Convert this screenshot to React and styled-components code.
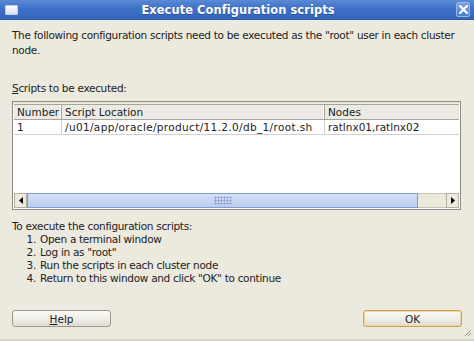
import styled, { createGlobalStyle } from 'styled-components';

const GlobalStyle = createGlobalStyle`
  html, body {
    margin: 0;
    padding: 0;
    background: #ece9de;
  }
  body {
    font-family: "DejaVu Sans", Verdana, sans-serif;
    font-size: 10.5px;
    color: #222;
  }
`;

const rows = [
  {
    number: '1',
    location: '/u01/app/oracle/product/11.2.0/db_1/root.sh',
    nodes: 'ratlnx01,ratlnx02',
  },
];

const steps = [
  'Open a terminal window',
  'Log in as "root"',
  'Run the scripts in each cluster node',
  'Return to this window and click "OK" to continue',
];

export default function App() {
  return (
    <>
      <GlobalStyle />
      <Window>
        <TitleBar>
          <WindowIcon />
          <Title>Execute Configuration scripts</Title>
          <CloseButton aria-label='Close'>
            <svg width='9' height='9' viewBox='0 0 9 9'>
              <path d='M1 1 L8 8 M8 1 L1 8' stroke='#fff' strokeWidth='2.2' strokeLinecap='square' />
            </svg>
          </CloseButton>
        </TitleBar>

        <Body>
          <Intro>
            The following configuration scripts need to be executed as the "root" user in each cluster
            <br />
            node.
          </Intro>

          <Label>
            <u>S</u>cripts to be executed:
          </Label>

          <TableBox>
            <HeaderRow>
              <HeadCell>Number</HeadCell>
              <HeadCell>Script Location</HeadCell>
              <HeadCell $last>Nodes</HeadCell>
            </HeaderRow>
            {rows.map((r) => (
              <Row key={r.number}>
                <Cell>{r.number}</Cell>
                <Cell $wide>{r.location}</Cell>
                <Cell $last>{r.nodes}</Cell>
              </Row>
            ))}
            <Filler />
            <ScrollBar>
              <ArrowButton>
                <svg width='4' height='7' viewBox='0 0 4 7'>
                  <path d='M4 0 L0 3.5 L4 7 Z' fill='#000' />
                </svg>
              </ArrowButton>
              <Thumb>
                <Grip />
              </Thumb>
              <Track />
              <ArrowButton>
                <svg width='4' height='7' viewBox='0 0 4 7'>
                  <path d='M0 0 L4 3.5 L0 7 Z' fill='#000' />
                </svg>
              </ArrowButton>
            </ScrollBar>
          </TableBox>

          <Instructions>
            <div>To execute the configuration scripts:</div>
            <Steps>
              {steps.map((s, i) => (
                <li key={i}>
                  <Num>{i + 1}.</Num>
                  {s}
                </li>
              ))}
            </Steps>
          </Instructions>

          <ButtonRow>
            <Button>
              <u>H</u>elp
            </Button>
            <Button $default>OK</Button>
          </ButtonRow>
        </Body>
        <ResizeGrip>
          <svg width='8' height='8' viewBox='0 0 8 8'>
            <path d='M7 1 L1 7 M7 4 L4 7' stroke='#9a9888' strokeWidth='1' />
          </svg>
        </ResizeGrip>
      </Window>
    </>
  );
}

const Window = styled.div`
  position: relative;
  width: 474px;
  height: 341px;
  display: flex;
  flex-direction: column;
  background: #ece9de;
  border-bottom: 2px solid #d6d3c6;
  box-sizing: border-box;
  overflow: hidden;
`;

const TitleBar = styled.div`
  height: 20px;
  flex: none;
  display: flex;
  align-items: center;
  padding: 0 4px 0 5px;
  background: linear-gradient(#5b8bd6, #3d70c6 45%, #3566bd);
  border-bottom: 1px solid #2d5aa8;
  box-sizing: border-box;
`;

const WindowIcon = styled.div`
  width: 11px;
  height: 8px;
  background: linear-gradient(#ffffff, #d8dff0);
  border: 1px solid #c4cfe6;
  border-radius: 1px;
`;

const Title = styled.div`
  flex: 1;
  text-align: center;
  color: #fff;
  font-weight: bold;
  font-size: 11.4px;
  letter-spacing: 0.1px;
  text-shadow: 0 1px 0 #2a4f92;
  padding-left: 2px;
`;

const CloseButton = styled.div`
  width: 14px;
  height: 15px;
  display: flex;
  align-items: center;
  justify-content: center;
  background: linear-gradient(#7aa3e4, #4b7dd0);
  border: 1px solid #9ab6e6;
  border-radius: 2px;
  box-sizing: border-box;
`;

const Body = styled.div`
  flex: 1;
  display: flex;
  flex-direction: column;
  padding: 8px 13px 0 12px;
  letter-spacing: -0.3px;
`;

const Intro = styled.div`
  line-height: 15px;
  white-space: nowrap;
`;

const Label = styled.div`
  margin-top: 23px;
  line-height: 14px;
`;

const TableBox = styled.div`
  margin-top: 6px;
  width: 449px;
  height: 109px;
  display: flex;
  flex-direction: column;
  background: #fff;
  border: 1px solid #8f8d85;
  box-sizing: border-box;
  padding: 2px 1px 1px 1px;
  background-clip: padding-box;
  box-shadow: inset 0 1px 0 #ece9de, inset 0 2px 0 #ece9de;
  letter-spacing: 0;
`;

const columns = '48px 263px 1fr';

const HeaderRow = styled.div`
  display: grid;
  grid-template-columns: ${columns};
  height: 16px;
  background: #ebeae4;
  border-top: 1px solid #a7a59b;
  border-bottom: 1px solid #a7a59b;
  box-sizing: border-box;
`;

const HeadCell = styled.div`
  padding-left: 3px;
  line-height: 14px;
  white-space: nowrap;
  overflow: hidden;
  border-right: ${(p) => (p.$last ? 'none' : '1px solid #a7a59b')};
  box-shadow: ${(p) => (p.$last ? 'none' : 'inset -1px 0 0 #fff')};
`;

const Row = styled.div`
  display: grid;
  grid-template-columns: ${columns};
  height: 15px;
  border-bottom: 1px solid #d0d0d0;
  box-sizing: border-box;
`;

const Cell = styled.div`
  padding-left: 3px;
  line-height: 14px;
  white-space: nowrap;
  overflow: hidden;
  letter-spacing: ${(p) => (p.$wide ? '0.35px' : '0')};
  border-right: ${(p) => (p.$last ? 'none' : '1px solid #d0d0d0')};
`;

const Filler = styled.div`
  flex: 1;
`;

const ScrollBar = styled.div`
  height: 15px;
  display: flex;
  background: #ece9de;
  border-top: 1px solid #fff;
`;

const ArrowButton = styled.div`
  width: 13px;
  flex: none;
  display: flex;
  align-items: center;
  justify-content: center;
  background: #ece9de;
  border: 1px solid #b3b0a4;
  box-sizing: border-box;
`;

const Thumb = styled.div`
  width: 391px;
  flex: none;
  display: flex;
  align-items: center;
  justify-content: center;
  background: linear-gradient(#d3dff5, #bccdee);
  border: 1px solid #7f9bd1;
  box-sizing: border-box;
`;

const Grip = styled.div`
  width: 18px;
  height: 9px;
  background-image: radial-gradient(circle, #8198cc 0.9px, transparent 1.1px);
  background-size: 3px 3px;
`;

const Track = styled.div`
  flex: 1;
  background: #ebe8dc;
  border-top: 1px solid #c8c5b8;
  border-bottom: 1px solid #c8c5b8;
`;

const Instructions = styled.div`
  margin-top: 10px;
  line-height: 13px;
`;

const Steps = styled.ol`
  list-style: none;
  margin: 0;
  padding: 0 0 0 14px;
`;

const Num = styled.span`
  display: inline-block;
  width: 10px;
  margin-right: 4px;
  text-align: right;
`;

const ButtonRow = styled.div`
  margin-top: 25px;
  display: flex;
  justify-content: space-between;
  width: 450px;
  letter-spacing: 0;
`;

const Button = styled.div`
  width: 99px;
  height: 17px;
  display: flex;
  align-items: center;
  justify-content: center;
  box-sizing: border-box;
  border-radius: 3px;
  border: 1px solid ${(p) => (p.$default ? '#c9a35a' : '#9b998e')};
  background: linear-gradient(#fbfaf6, #ecebe4 60%, #dedcd2);
  box-shadow: ${(p) => (p.$default ? 'inset 0 0 0 1px #f3d79a' : 'none')};
  color: #222;
`;

const ResizeGrip = styled.div`
  position: absolute;
  right: 2px;
  bottom: 2px;
  width: 8px;
  height: 8px;
  display: flex;
`;
